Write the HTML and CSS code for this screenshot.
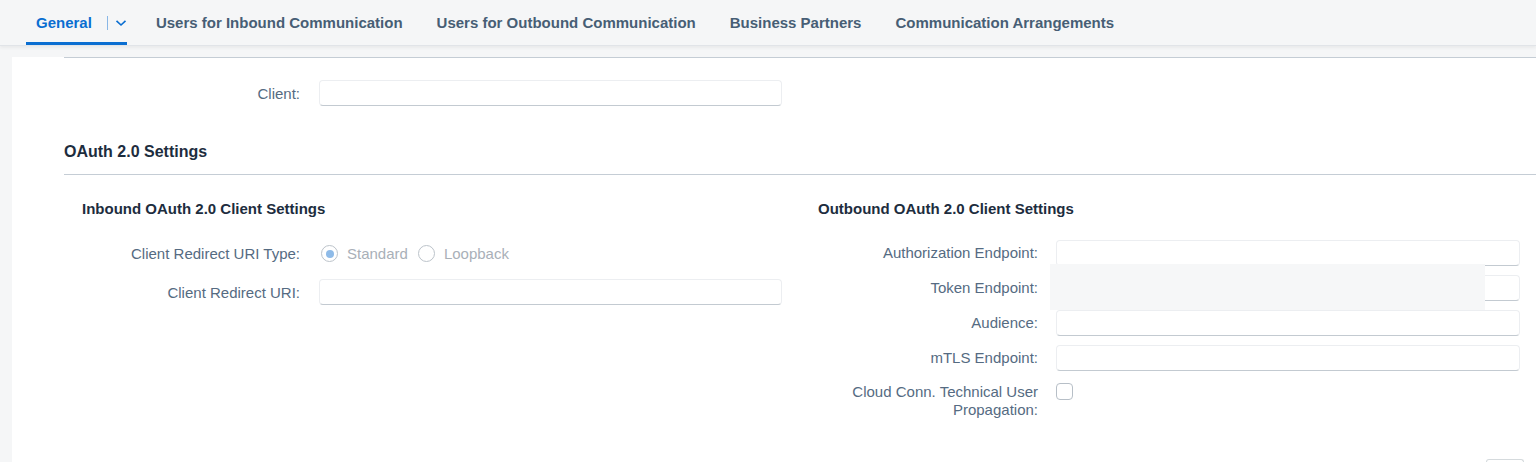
FILE: index.html
```html
<!doctype html>
<html lang="en">
<head>
  <meta charset="utf-8">
  <title>Communication System</title>
  <link rel="stylesheet" href="styles.css">
</head>
<body>
  <div class="tabbar">
    <div class="tab active">
      <span>General</span>
      <span class="tab-sep"></span>
      <svg class="chevron" width="12" height="8" viewBox="0 0 12 8"><path d="M1.5 1.8 L6 6 L10.5 1.8" fill="none" stroke="#0a6ed1" stroke-width="1.6"/></svg>
    </div>
    <div class="tab">Users for Inbound Communication</div>
    <div class="tab">Users for Outbound Communication</div>
    <div class="tab">Business Partners</div>
    <div class="tab">Communication Arrangements</div>
  </div>

  <div class="page">
    <div class="content">
      <div class="rule first"></div>

      <div class="column">
        <div class="row">
          <label class="label">Client:</label>
          <div class="input"></div>
        </div>
      </div>

      <h2 class="section-title">OAuth 2.0 Settings</h2>
      <div class="rule"></div>

      <div class="columns">
        <div class="column">
          <h3 class="group-title">Inbound OAuth 2.0 Client Settings</h3>
          <div class="row radio-row">
            <label class="label">Client Redirect URI Type:</label>
            <div class="radios">
              <span class="radio checked"></span><span class="radio-text">Standard</span>
              <span class="radio"></span><span class="radio-text">Loopback</span>
            </div>
          </div>
          <div class="row">
            <label class="label">Client Redirect URI:</label>
            <div class="input"></div>
          </div>
        </div>

        <div class="column">
          <h3 class="group-title">Outbound OAuth 2.0 Client Settings</h3>
          <div class="rows">
            <div class="row">
              <label class="label">Authorization Endpoint:</label>
              <div class="input"></div>
            </div>
            <div class="row">
              <label class="label">Token Endpoint:</label>
              <div class="input"></div>
              <div class="masked"></div>
            </div>
            <div class="row">
              <label class="label">Audience:</label>
              <div class="input"></div>
            </div>
            <div class="row">
              <label class="label">mTLS Endpoint:</label>
              <div class="input"></div>
            </div>
            <div class="row check-row">
              <label class="label">Cloud Conn. Technical User Propagation:</label>
              <div><span class="checkbox"></span></div>
            </div>
          </div>
        </div>
      </div>

      <div class="footer">
        <span class="footer-btn"></span>
      </div>
    </div>
  </div>
</body>
</html>
```

FILE: styles.css
```css
body {
  margin: 0;
  background: #f5f6f7;
  font-family: "Liberation Sans", Arial, sans-serif;
  color: #1d2d3e;
}

.tabbar {
  display: flex;
  height: 45px;
  padding-left: 26px;
  background: #f5f6f7;
  border-bottom: 1px solid #e1e4e8;
  box-shadow: 0 2px 3px rgba(0, 0, 0, 0.05);
}

.tab {
  display: flex;
  align-items: center;
  padding: 0 17px;
  font-size: 15px;
  font-weight: bold;
  color: #475e75;
  box-sizing: border-box;
}

.tab.active {
  color: #0a6ed1;
  padding: 3px 0 0 10px;
  margin-right: 12px;
  border-bottom: 3px solid #0a6ed1;
}

.tab-sep {
  width: 1px;
  height: 14px;
  background: #89b7e6;
  margin: 0 7px 0 15px;
}

.chevron {
  display: block;
}

.page {
  padding-left: 12px;
}

.content {
  background: #fff;
  padding-left: 52px;
  min-height: 420px;
}

.rule {
  height: 1px;
  background: #c5cdd5;
}

.rule.first {
  margin-top: 11px;
}

.columns {
  display: flex;
}

.column {
  width: 736px;
  padding: 0 18px;
  box-sizing: border-box;
}

.row {
  display: grid;
  grid-template-columns: 218px 463px;
  column-gap: 19px;
  align-items: center;
  position: relative;
}

.content > .column .row {
  margin-top: 22px;
}

.label {
  text-align: right;
  font-size: 15px;
  color: #556b82;
}

.input {
  height: 26px;
  box-sizing: border-box;
  background: #fff;
  border: 1px solid #eceef1;
  border-bottom-color: #c3cad1;
  border-radius: 4px;
}

.section-title {
  margin: 37px 0 0;
  height: 31px;
  font-size: 16px;
  font-weight: bold;
}

.group-title {
  margin: 25px 0 0;
  height: 39px;
  font-size: 15px;
  font-weight: bold;
}

.radio-row {
  height: 27px;
  margin-top: 1px;
}

.radios {
  display: flex;
  align-items: center;
  font-size: 15px;
  color: #a9b0b8;
}

.radio {
  width: 17px;
  height: 17px;
  box-sizing: border-box;
  border: 1px solid #bcc3ca;
  border-radius: 50%;
  margin: 0 9px 0 2px;
  position: relative;
}

.radio.checked::after {
  content: "";
  position: absolute;
  left: 3.5px;
  top: 3.5px;
  width: 8px;
  height: 8px;
  border-radius: 50%;
  background: #8fbbe8;
}

.radio-text {
  margin-right: 8px;
}

.column > .radio-row + .row {
  margin-top: 12px;
}

.rows {
  display: flex;
  flex-direction: column;
  gap: 8px;
}

.rows .row {
  grid-template-columns: 220px 464px;
  column-gap: 18px;
  height: 27px;
}

.rows .check-row {
  height: auto;
  margin-top: 4px;
  align-items: start;
}

.check-row .label {
  line-height: 18px;
  padding-left: 20px;
}

.checkbox {
  display: block;
  width: 17px;
  height: 17px;
  box-sizing: border-box;
  border: 1px solid #b7bfc7;
  border-radius: 4px;
}

.masked {
  position: absolute;
  left: 232px;
  top: -10px;
  width: 435px;
  height: 46px;
  background: #f6f7f8;
}

.footer {
  display: flex;
  justify-content: flex-end;
  padding: 40px 12px 0 0;
}

.footer-btn {
  width: 36px;
  height: 2px;
  border: 1px solid #d5dadd;
  border-bottom: 0;
  border-radius: 8px 8px 0 0;
  background: #fff;
}
```
